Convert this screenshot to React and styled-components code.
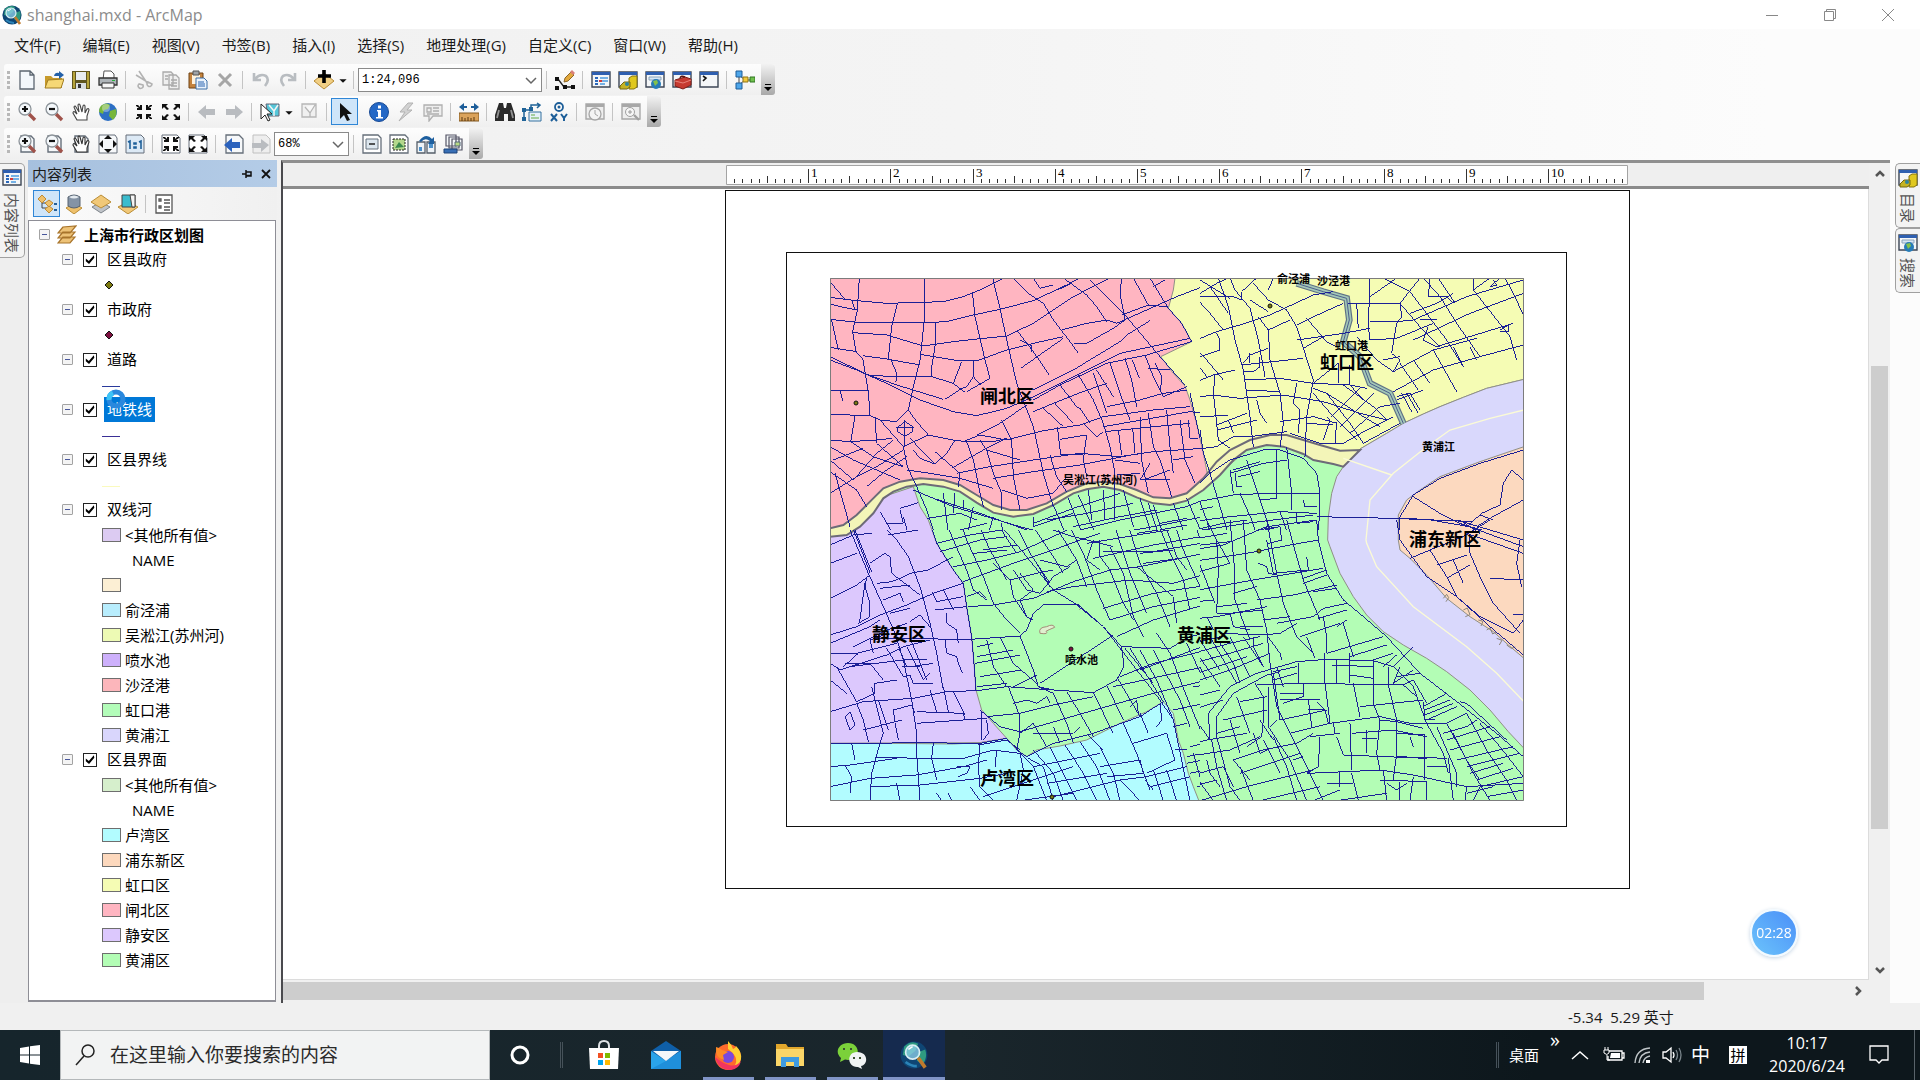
import React, { useState } from "react";
import styled, { createGlobalStyle, css } from "styled-components";

const GlobalStyle = createGlobalStyle`
  * {
    box-sizing: border-box;
  }
  html, body, #root {
    margin: 0;
    height: 100%;
  }
  body {
    font-family: "Open Sans", "Noto Sans CJK SC", sans-serif;
    font-size: 15px;
    line-height: 20px;
    color: #1a1a1a;
    overflow: hidden;
  }
  button, input, select {
    font: inherit;
    color: inherit;
    margin: 0;
    padding: 0;
    border: 0;
    background: none;
    border-radius: 0;
  }
`;

const Window = styled.div`
  display: flex;
  flex-direction: column;
  height: 100vh;
  background: linear-gradient(90deg, #f0f0f0, #f4f4f4 50%, #fcfcfc 92%);
`;

const TitleBar = styled.header`
  display: flex;
  align-items: center;
  height: 29px;
  padding: 0 3px 0 2px;
  background: #fff;
  color: #8c8c8c;
`;

const Title = styled.h1`
  flex: 1;
  margin: 0 0 0 5px;
  font-size: 16px;
  font-weight: 400;
`;

const WindowButton = styled.button`
  display: flex;
  align-items: center;
  justify-content: center;
  width: 58px;
  height: 29px;
`;

const MenuBar = styled.nav`
  display: flex;
  align-items: center;
  height: 33px;
  padding: 0 0 1px 14px;
  gap: 22px;
`;

const MenuItem = styled.button`
  white-space: nowrap;
`;

const Toolbars = styled.div`
  display: flex;
  flex-direction: column;
  align-items: flex-start;
  gap: 1px;
  height: 98px;
  padding: 2px 0 0 4px;
`;

const Toolbar = styled.div`
  display: flex;
  align-items: center;
  height: 31px;
  padding-left: 8px;
  border-radius: 3px;
  background: linear-gradient(#fdfdfd, #f6f6f6 60%, #efefef);
`;

const Grip = styled.span`
  width: 3px;
  height: 18px;
  margin: 0 3px 0 -5px;
  background: repeating-linear-gradient(#b8b8b8 0 3px, transparent 3px 5px);
`;

const ToolButton = styled.button`
  display: flex;
  align-items: center;
  justify-content: center;
  width: ${(p) => (p.$narrow ? 12 : 27)}px;
  height: 27px;
  ${(p) =>
    p.$active &&
    css`
      background: #cfe5f9;
      border: 1px solid #2f86d6;
    `}
`;

const Separator = styled.span`
  width: 1px;
  height: 18px;
  margin: 0 4px;
  background: #c4c4c4;
`;

const Spacer = styled.span`
  width: 7px;
`;

const Overflow = styled.button`
  display: flex;
  align-items: flex-end;
  justify-content: center;
  align-self: stretch;
  width: 14px;
  margin-left: 3px;
  padding-bottom: 3px;
  border-radius: 0 3px 3px 0;
  background: linear-gradient(#f2f2f2, #a9a9a9);
`;

const Combo = styled.label`
  position: relative;
  display: flex;
  width: ${(p) => p.$width}px;
  height: 24px;
  svg {
    position: absolute;
    right: 5px;
    top: 8px;
    pointer-events: none;
  }
`;

const Select = styled.select`
  flex: 1;
  appearance: none;
  padding-left: 3px;
  border: 1px solid #8a8a8a;
  background: #fff;
  font-family: "Liberation Mono", monospace;
  font-size: 12px;
  color: #000;
`;

const Workspace = styled.main`
  display: flex;
  flex: 1;
  min-height: 0;
`;

const SideTabs = styled.div`
  display: flex;
  flex-direction: column;
  align-items: ${(p) => (p.$right ? "flex-end" : "flex-start")};
  width: ${(p) => (p.$right ? 30 : 28)}px;
  padding-top: 3px;
  background: ${(p) => (p.$right ? "#fcfcfc" : "#eeeeee")};
`;

const SideTab = styled.button`
  display: flex;
  flex-direction: column;
  align-items: center;
  width: 25px;
  gap: 5px;
  padding: 4px 0;
  border: 1px solid #a0a0a0;
  border-radius: ${(p) => (p.$right ? "5px 0 0 5px" : "0 5px 5px 0")};
  ${(p) => (p.$right ? "border-right: 0;" : "border-left: 0;")}
  background: #f3f3f3;
  color: #555;
  span {
    writing-mode: vertical-rl;
    text-orientation: sideways;
  }
`;

const Panel = styled.aside`
  display: flex;
  flex-direction: column;
  width: 249px;
  margin-right: 4px;
`;

const PanelHeader = styled.div`
  display: flex;
  align-items: center;
  height: 27px;
  padding: 0 5px 0 4px;
  gap: 7px;
  background: linear-gradient(90deg, #a6c0de, #b4cce7);
  h2 {
    flex: 1;
    margin: 0;
    font-size: 15px;
    font-weight: 400;
  }
  button {
    display: flex;
  }
`;

const PanelTools = styled.div`
  display: flex;
  align-items: center;
  height: 33px;
  padding-left: 5px;
  background: linear-gradient(90deg, #fbfbfb, #f0f0f0);
`;

const Tree = styled.ul`
  flex: 1;
  margin: 0 1px 1px 0;
  padding: 1px 0 0;
  list-style: none;
  background: #fff;
  border: 1px solid #8e8e96;
  border-bottom-width: 2px;
`;

const TreeRow = styled.li`
  position: relative;
  display: flex;
  align-items: center;
  height: 25px;
  padding-left: ${(p) => p.$indent}px;
  font-weight: ${(p) => (p.$bold ? 700 : 400)};
  white-space: nowrap;
  color: #000;
`;

const Expander = styled.button`
  width: 11px;
  height: 11px;
  border: 1px solid #a3a3a3;
  border-radius: 1px;
  background: linear-gradient(#47569b, #47569b) center / 5px 1px no-repeat #f4f4f4;
`;

const Check = styled.input`
  appearance: none;
  width: 14px;
  height: 14px;
  border: 1px solid #222;
  background: #fff;
  &:checked::after {
    content: "";
    display: block;
    width: 12px;
    height: 12px;
    background: #000;
    clip-path: polygon(15% 42%, 40% 62%, 82% 14%, 86% 36%, 42% 88%, 15% 64%);
  }
`;

const LayerLabel = styled.label`
  display: flex;
  align-items: center;
  margin-left: 10px;
  gap: 7px;
  span {
    height: 25px;
    padding: 2px 3px;
    ${(p) => p.$selected && "background: #0078d7; color: #fff;"}
  }
`;

const Busy = styled.svg`
  position: absolute;
  left: 77px;
  top: -8px;
`;

const Swatch = styled.span`
  width: 19px;
  height: 14px;
  margin-right: 4px;
  border: 1px solid #6e6e6e;
  background: ${(p) => p.$color};
`;

const Symbol = styled.svg`
  display: block;
`;

const View = styled.section`
  display: flex;
  flex: 1;
  min-width: 0;
  border-left: 2px solid #4a4a4e;
  border-top: 3px solid #8f8f8f;
  background: #efefef;
`;

const ViewColumn = styled.div`
  display: flex;
  flex-direction: column;
  flex: 1;
  min-width: 0;
`;

const RulerBar = styled.div`
  height: 26px;
  padding: 2px 0 0 443px;
  border-bottom: 3px solid #8b8b8b;
  overflow: hidden;
`;

const RulerFace = styled.svg`
  display: block;
  font-family: "Liberation Serif", serif;
  font-size: 13px;
`;

const Canvas = styled.div`
  flex: 1;
  min-height: 0;
  padding: 1px 0 0 442px;
  background: #fff;
  border-right: 1px solid #dcdcdc;
  border-bottom: 1px solid #dcdcdc;
  overflow: hidden;
`;

const Page = styled.div`
  width: 905px;
  height: 699px;
  padding: 61px 60px;
  border: 1px solid #111;
`;

const DataFrame = styled.div`
  width: 781px;
  height: 575px;
  padding: 25px 43px;
  border: 1px solid #111;
`;

const MapDrawing = styled.svg`
  display: block;
  overflow: visible;
  font-family: "Noto Sans CJK SC", sans-serif;
`;

const ScrollBar = styled.div`
  display: flex;
  flex-direction: ${(p) => (p.$vertical ? "column" : "row")};
  ${(p) => (p.$vertical ? "width: 21px; padding: 0 2px;" : "height: 23px; padding: 2px 0 3px;")}
  background: #f0f0f0;
`;

const Track = styled.div`
  flex: ${(p) => p.$size};
`;

const Thumb = styled.div`
  flex: ${(p) => p.$size};
  background: #cdcdcd;
`;

const ScrollButton = styled.button`
  display: flex;
  align-items: center;
  justify-content: center;
  ${(p) => (p.$vertical ? "height: 22px;" : "width: 22px;")}
`;

const StatusBar = styled.footer`
  display: flex;
  justify-content: flex-end;
  align-items: center;
  height: 27px;
  background: #f0f0f0;
  p {
    width: 352px;
    margin: 0;
    white-space: pre;
  }
`;

const Timer = styled.div`
  position: fixed;
  right: 122px;
  bottom: 123px;
  display: flex;
  align-items: center;
  justify-content: center;
  width: 48px;
  height: 48px;
  border: 2px solid #f2faff;
  border-radius: 50%;
  background: linear-gradient(45deg, #6cc4fb, #4a8ff8);
  box-shadow: 0 1px 4px #c4d4e4;
  color: #fff;
  font-size: 14px;
`;

const TaskBar = styled.div`
  display: flex;
  align-items: stretch;
  height: 50px;
  background: linear-gradient(90deg, #16252c, #1a262c 50%, #0d171c 80%);
  color: #fff;
`;

const TaskButton = styled.button`
  display: flex;
  align-items: center;
  justify-content: center;
  width: ${(p) => p.$width || 62}px;
  border-bottom: 3px solid transparent;
  border-top: 3px solid transparent;
  ${(p) =>
    p.$open &&
    css`
      background: linear-gradient(#8094c6, #8094c6) center bottom / ${p.$active ? 62 : 51}px 3px no-repeat
        ${p.$active ? "#152a4e" : "transparent"};
      background-origin: border-box;
    `}
`;

const SearchBox = styled.label`
  display: flex;
  align-items: center;
  width: 430px;
  gap: 15px;
  padding-left: 14px;
  border: 1px solid #b4b8ba;
  background: #f2f3f3;
  color: #222;
  input {
    flex: 1;
    min-width: 0;
    font-size: 19px;
    outline: 0;
  }
  input::placeholder {
    color: #2a2a2a;
    opacity: 1;
  }
`;

const TaskDivider = styled.span`
  width: 3px;
  height: 26px;
  align-self: center;
  border: 1px solid #46525a;
  border-width: 0 1px;
`;

const Tray = styled.div`
  display: flex;
  align-items: center;
  margin-left: auto;
`;

const TrayItem = styled.button`
  display: flex;
  align-items: center;
  justify-content: center;
  width: ${(p) => p.$width || 29}px;
  font-size: ${(p) => p.$size || 15}px;
  ${(p) => p.$raised && "align-self: flex-start;"}
`;

const Ime = styled.span`
  width: 18px;
  height: 18px;
  background: #fff;
  color: #000;
  font-size: 15px;
  line-height: 18px;
`;

const Clock = styled.time`
  width: 92px;
  font-size: 16px;
  line-height: 23px;
  text-align: center;
`;

const ShowDesktop = styled.button`
  width: 6px;
  margin-left: 9px;
  align-self: stretch;
  border-left: 1px solid #59636a;
`;

const pageShape = (
  <path d="M4 2h10l3 3v13H4z" fill="#f6f8fa" stroke="#666f7a" strokeWidth="1.4" />
);
const frameShape = (
  <>
    <path d="M1 2h18v15H1z" fill="#f4f6f8" stroke="#3c4656" strokeWidth="1.4" />
    <path d="M1 2h18v3H1z" fill="#2e5fb0" />
  </>
);
const grayFrame = (
  <>
    <path d="M1 2h18v15H1z" fill="#eee" stroke="#a8a8a8" strokeWidth="1.4" />
    <path d="M1 2h18v3H1z" fill="#a8a8a8" />
  </>
);
const inward = "M2 3h2l2 2V3h2v5H3V6h2L2 4zM18 3h-2l-2 2V3h-2v5h5V6h-2l3-2zM2 17h2l2-2v2h2v-5H3v2h2l-3 2zM18 17h-2l-2-2v2h-2v-5h5v2h-2l3 2z";
const outward = "M1 2h6L5 4l3 3-2 1-3-3-2 2zM19 2h-6l2 2-3 3 2 1 3-3 2 2zM1 18h6l-2-2 3-3-2-1-3 3-2-2zM19 18h-6l2-2-3-3 2-1 3 3 2-2z";
const handPath = "M6 18 2 11q0-2 2-1l2 2-3-7q1-2 2 0l3 5-1-7q1-2 2 0l2 7 1-6q1-2 2 0v7l2-4q2-1 2 1l-2 6v4z";
const lens = (sign) => (
  <>
    <path d="m12 12 6 6" stroke="#a0524a" strokeWidth="3.4" />
    <circle cx="8" cy="7" r="6" fill="#f4f8fb" stroke="#8c9399" strokeWidth="1.3" />
    <path d={sign} stroke="#111" strokeWidth="2.2" />
  </>
);
const globe = (
  <>
    <circle cx="10" cy="10" r="9" fill="#2d6fc4" />
    <path d="M4 3q5-3 8 0l-2 4-4 1-1 4-4-2q0-5 3-7zm8 6 6-2q2 6-3 11l-4-4z" fill="#77b63c" />
    <circle cx="8" cy="6" r="4" fill="#fff" opacity=".35" />
  </>
);

const icons = {
  app: (
    <>
      <circle cx="10" cy="10" r="9.6" fill="#0f4674" />
      <path d="M3 4q5-5 10-2l-2 5-5 4-4-1zm10 4 5-2q2 6-2 11l-4-3z" fill="#2f9a80" />
      <path d="M4 15q4 3 8 3" stroke="#2b84b8" strokeWidth="2" />
      <circle cx="9" cy="8" r="5" fill="#8fd0ea" fillOpacity=".75" stroke="#d9eef4" strokeWidth="1.2" />
      <path d="m6 6 3-2" stroke="#fff" />
      <path d="m13 12 5 7" stroke="#c07a2c" strokeWidth="2.6" />
    </>
  ),
  new: <path d="M3 1h10l4 4v14H3zM13 1v4h4" fill="#f3f7fb" stroke="#5c6670" strokeWidth="1.3" />,
  open: (
    <>
      <path d="M1 6h6l2 2h9v10H1z" fill="#c79a2b" />
      <path d="m4 10 16-1-3 9H1z" fill="#f6d876" stroke="#a17d22" />
      <path d="M10 6q1-4 5-3V1l5 4-5 4V6z" fill="#2360a8" />
    </>
  ),
  save: (
    <>
      <path d="M1 1h18v18H1z" fill="#5f5620" />
      <path d="M5 2h10v8H5z" fill="#e8edf0" />
      <path d="M5 13h10v6H5z" fill="#d8dde0" />
      <path d="M7 14h3v4H7z" fill="#333" />
      <path d="M2 2h2v16H2zm14 0h2v16h-2z" fill="#b6a43a" />
    </>
  ),
  print: (
    <>
      <path d="M6 1h7l3 3v6H5z" fill="#fff" stroke="#555" />
      <path d="M1 8h18v7H1z" fill="#aeb4b8" stroke="#333" strokeWidth="1.3" />
      <path d="M4 13h12v5H4z" fill="#f6f6f6" stroke="#333" />
      <path d="M14 10h3v1h-3z" fill="#24b43a" />
    </>
  ),
  cut: <path d="m5 1 8 12M2 5l13 8M9 15a2.5 2.5 0 1 1-4-1zm9-1a2.5 2.5 0 1 1-4-2z" stroke="#b3b3b3" strokeWidth="1.6" fill="none" />,
  copy: <path d="M2 2h8l2 2v11H2zM8 5h7l3 3v11H8zM10 10h6m-6 3h6m-6 3h6M4 6h3M4 9h3" fill="#efefef" stroke="#aaa" strokeWidth="1.3" />,
  paste: (
    <>
      <path d="M1 3h14v15H1z" fill="#c4823c" stroke="#6f4215" />
      <path d="M4 5h8v9H4z" fill="#fff2dd" />
      <path d="M5 1h6v4H5z" fill="#a0a4a8" stroke="#555" />
      <path d="M8 8h8l3 3v8H8z" fill="#eaf3fc" stroke="#3c6ea6" />
      <path d="M10 12h6m-6 2h7m-7 2h7" stroke="#2b64b0" />
    </>
  ),
  delete: <path d="m4 4 12 12M16 4 4 16" stroke="#a6a6a6" strokeWidth="3" />,
  undo: <path d="M3 3v7h7M4 9q5-6 11-3 4 4-1 10" stroke="#b9bdc1" strokeWidth="2.6" fill="none" />,
  redo: <path d="M17 3v7h-7M16 9Q11 3 5 6q-4 4 1 10" stroke="#b9bdc1" strokeWidth="2.6" fill="none" />,
  add: (
    <>
      <path d="m10 3 10 8-10 8-10-8z" fill="#f1cf84" stroke="#b98c36" />
      <path d="M10 0v13M4 6h13" stroke="#000" strokeWidth="3.6" />
    </>
  ),
  down: <path d="M1 8h18l-9 9z" fill="#111" />,
  editor: (
    <>
      <path d="m3 9 6 8h9" stroke="#222" fill="none" strokeWidth="1.3" />
      <path d="M0 7h4v4H0zm0 9h4v4H0zm8-1h4v4H8zm8 0h4v4h-4z" fill="#111" />
      <path d="m9 12 1-4 6-6 3 3-6 6z" fill="#e2a83c" stroke="#8b6527" />
      <path d="m15 2 2-2 3 3-2 2z" fill="#d97f7a" />
    </>
  ),
  toc: (
    <>
      {frameShape}
      <path d="M4 8h3m-3 3h3m-3 3h3" stroke="#2a68bc" strokeWidth="1.8" />
      <path d="M9 8h8M9 11h8M9 14h5" stroke="#4a9adf" strokeWidth="1.6" />
      <path d="M8 10h3v2H8z" fill="#d23c3c" />
    </>
  ),
  catalog: (
    <>
      {frameShape}
      <path d="m11 8 3-2h5v11l-3 2h-5z" fill="#e0c81f" stroke="#857410" />
      <path d="m2 16 4-4h6v5l-3 2H2z" fill="#c5b322" stroke="#726612" />
      <circle cx="9" cy="14" r="2" fill="#2f84a0" />
    </>
  ),
  search: (
    <>
      {frameShape}
      <path d="M4 7h12v3H4z" fill="#d5e6f5" stroke="#8da4ba" />
      <circle cx="11" cy="14" r="5" fill="#277bb7" />
      <path d="m8 11 4-1 1 3-3 3z" fill="#83c24b" />
    </>
  ),
  toolbox: (
    <>
      {frameShape}
      <path d="m3 10 10-3 6 2v6l-8 4-8-3z" fill="#c63a30" stroke="#7d1c16" />
      <path d="M8 8q1-3 5-1" stroke="#5a1511" fill="none" strokeWidth="1.4" />
      <path d="m3 11 8 2 8-3" stroke="#e8837a" fill="none" />
    </>
  ),
  python: (
    <>
      {frameShape}
      <path d="m4 6 3 2-3 3" stroke="#111" strokeWidth="1.6" fill="none" />
    </>
  ),
  model: (
    <>
      <path d="M4 5v10M4 5l6 5h7M4 15l6-5" stroke="#444" fill="none" />
      <path d="M1 1h6v6H1zm0 12h6v6H1z" fill="#4ea6ea" stroke="#1d5c98" />
      <path d="M8 7h5v5H8z" fill="#f2c93b" stroke="#8e7317" />
      <path d="M15 7h5v5h-5z" fill="#70c04e" stroke="#2f7421" />
    </>
  ),
  zoomIn: lens("M5 7h6M8 4v6"),
  zoomOut: lens("M5 7h6"),
  pan: <path d={handPath} fill="#fff" stroke="#444" strokeWidth="1.1" />,
  globe,
  fixedIn: <path d={inward} fill="#111" />,
  fixedOut: <path d={outward} fill="#111" />,
  back: <path d="m1 10 8-7v4h9v6H9v4z" fill="#b9bcc0" />,
  forward: <path d="m19 10-8-7v4H2v6h9v4z" fill="#b9bcc0" />,
  select: (
    <>
      <path d="M6 2h13v12H8z" fill="#55c6d9" stroke="#667" />
      <path d="m9 3 5 6 4-6M14 9v5" stroke="#f4f4f4" fill="none" strokeWidth="1.5" />
      <path d="M1 2v15l4-4 3 6 2-1-3-6h5z" fill="#fff" stroke="#222" />
    </>
  ),
  clear: <path d="M3 2h14v13H3zM6 5l5 6 5-8M11 11v4" fill="#f0f0f0" stroke="#b6b6b6" strokeWidth="1.3" />,
  pointer: <path d="M5 1v16l4-4 3 6 3-1-3-6h5z" fill="#111" />,
  info: (
    <>
      <circle cx="10" cy="10" r="9.5" fill="#2468c6" stroke="#184993" />
      <path d="M8 8h4v7h2v1.500H7V15h2v-5.500H8zM9 3.500h3v3H9z" fill="#fff" />
    </>
  ),
  bolt: <path d="m12 1-8 9h5l-6 9 13-11h-5l6-7z" fill="#d2d2d2" stroke="#b2b2b2" />,
  popup: <path d="M1 3h18v11h-9l-4 5v-5H1zM4 6h4v4H4zm6 0h6m-6 3h6M4 12h12" fill="#eee" stroke="#b0b0b0" strokeWidth="1.3" />,
  measure: (
    <>
      <path d="m0 5 5-4v3h3v2H5v3zm20 0-5-4v3h-3v2h3v3z" fill="#1c5d99" />
      <path d="M0 11h20v8H0z" fill="#dba35b" stroke="#80561f" />
      <path d="M3 19v-4m3 4v-3m3 3v-4m3 4v-3m3 3v-4" stroke="#5a3910" />
    </>
  ),
  find: (
    <>
      <path d="M4 1h4l1 5h2l1-5h4l4 12v6h-7v-7H9v7H0v-6z" fill="#2b2b2b" />
      <path d="m4 8-2 8m14-8 2 8" stroke="#929292" strokeWidth="1.8" />
    </>
  ),
  route: (
    <>
      <path d="M2 17V8h7V3h8M15 1l3 2-3 3" stroke="#1f6398" strokeWidth="1.5" fill="none" />
      <path d="M0 6h4v4H0zm7-1h4v4H7zM0 15h4v4H0z" fill="#1f6398" />
      <path d="M7 10h12v9H7z" fill="#e6f1fa" stroke="#35719f" />
      <path d="M9 13h4m-4 3h8" stroke="#65a944" />
    </>
  ),
  xy: (
    <>
      <circle cx="10" cy="5" r="4" fill="none" stroke="#1e5f99" strokeWidth="1.8" />
      <circle cx="10" cy="5" r="1.500" fill="#1e5f99" />
      <path d="m2 12 6 7M8 12l-6 7M12 12l3 4 3-4M15 16v3" stroke="#1e5f99" strokeWidth="2" fill="none" />
    </>
  ),
  time: (
    <>
      {grayFrame}
      <circle cx="10" cy="12" r="6" fill="#f4f4f4" stroke="#a6a6a6" strokeWidth="1.3" />
      <path d="M10 8v4l3 2" stroke="#a6a6a6" fill="none" />
    </>
  ),
  viewer: (
    <>
      {grayFrame}
      <circle cx="9" cy="10" r="4.500" fill="#f6f6f6" stroke="#a0a0a0" />
      <path d="m13 13 5 5" stroke="#a0a0a0" strokeWidth="2.4" />
      <path d="M7 10h4M9 8v4" stroke="#999" />
    </>
  ),
  pageIn: (
    <>
      {pageShape}
      {lens("M5 7h6M8 4v6")}
    </>
  ),
  pageOut: (
    <>
      {pageShape}
      {lens("M5 7h6")}
    </>
  ),
  pagePan: (
    <>
      {pageShape}
      <path d={handPath} fill="#fff" stroke="#333" strokeWidth="1.1" />
    </>
  ),
  pageFull: (
    <>
      <path d="M1 1h16l2 3v15H1z" fill="#f6f8fa" stroke="#666f7a" />
      <path d="m10 1 4 4H6zm0 18 4-4H6zM1 10l4-4v8zm18 0-4-4v8z" fill="#111" />
    </>
  ),
  pageOne: (
    <>
      <path d="M1 1h15l3 3v15H1z" fill="#dce9f5" stroke="#666f7a" />
      <path d="M3 8l2-1v8m9-7 2-1v8M9 9h2v1H9zm0 4h2v1H9z" stroke="#1e5f99" strokeWidth="1.600" fill="none" />
    </>
  ),
  pageFixedIn: (
    <>
      <path d="M1 1h15l3 3v15H1z" fill="#fff" stroke="#666f7a" />
      <path d={inward} fill="#111" />
    </>
  ),
  pageFixedOut: (
    <>
      <path d="M1 1h15l3 3v15H1z" fill="#fff" stroke="#666f7a" />
      <path d={outward} fill="#111" />
    </>
  ),
  pageBack: (
    <>
      <path d="M2 1h13l4 4v14H2z" fill="#f6f8fa" stroke="#666f7a" strokeWidth="1.3" />
      <path d="m0 11 8-7v4h8v6H8v4z" fill="#2b62bd" />
    </>
  ),
  pageForward: (
    <>
      <path d="M2 1h13l4 4v14H2z" fill="#eee" stroke="#c0c0c0" />
      <path d="m18 11-8-6v4H1v5h9v4z" fill="#b9bcc0" />
    </>
  ),
  draft: (
    <>
      <path d="M1 1h15l3 3v15H1z" fill="#fff" stroke="#666f7a" strokeWidth="1.3" />
      <path d="M4 5h12v10H4z" fill="#dce6ee" stroke="#66727e" />
      <path d="M7 10h6" stroke="#222" strokeWidth="1.500" />
    </>
  ),
  focus: (
    <>
      <path d="M1 1h15l3 3v15H1z" fill="#fff" stroke="#666f7a" strokeWidth="1.3" />
      <path d="M4 5h12v11H4z" fill="#b4d88c" stroke="#222" strokeDasharray="2 1" />
      <path d="m6 14 4-6 5 5z" fill="#3c8b4e" />
    </>
  ),
  layout: (
    <>
      <path d="M1 8h8v11H1zm10 0h8v11h-8z" fill="#eef3f7" stroke="#555f6a" strokeWidth="1.300" />
      <path d="M3 13h3v4H3zm10-3h4v4h-4z" fill="#4a90cc" />
      <path d="M3 7q7-9 13-2l2-2v7h-6l2-3q-5-4-9 1z" fill="#1e5f9f" />
    </>
  ),
  pages: (
    <>
      <path d="M3 1h10v11H3zM6 3h10v11H6zM9 5h10v11H9z" fill="#f3f6f8" stroke="#556" strokeWidth="1.200" />
      <path d="M12 8h5v4h-5z" fill="#b6d884" stroke="#567" />
      <path d="M1 15h13v4H1z" fill="#386fb5" stroke="#1c4278" />
    </>
  ),
  byOrder: (
    <>
      <path d="M5 5v9h6M5 9h6" stroke="#444" fill="none" />
      <path d="m5 1 4 4-4 4-4-4zm7 5 4 3-4 4-4-4zm0 6 4 3-4 4-4-4z" fill="#eec06b" stroke="#c08a32" />
      <path d="M17 10h3m-3 6h3" stroke="#24609a" strokeWidth="2" />
    </>
  ),
  bySource: (
    <>
      <path d="m10 9 8 5-8 6-8-6z" fill="#eec06b" stroke="#b98c36" />
      <path d="M4 3q6-4 12 0v9q-6 4-12 0z" fill="#8493a5" stroke="#566270" />
      <path d="M5 3q5 3 10 0-5-3-10 0z" fill="#e4eaef" />
    </>
  ),
  byVisible: (
    <>
      <path d="m10 8 9 5-9 6-9-6z" fill="#bfc3c8" stroke="#7d838a" />
      <path d="m10 1 10 7-10 6L0 8z" fill="#f1c878" stroke="#b98c36" />
    </>
  ),
  bySelect: (
    <>
      <path d="m10 8 10 5-10 7-10-7z" fill="#f1c878" stroke="#b98c36" />
      <path d="M4 1h13v12H4z" fill="#3bbccd" stroke="#444" />
      <path d="M12 1h5v12h-3z" fill="#f4f4f4" stroke="#444" />
    </>
  ),
  options: <path d="M2 1h16v18H2zM5 5h2v2H5zm0 7h2v2H5zm5 1h6M10 6h6M10 9h6M10 16h6" fill="#fff" stroke="#555" strokeWidth="1.300" />,
  layers: (
    <path d="m6 12-5 6h12l5-6zM6 7l-5 6h12l5-6zm0-5L1 8h12l6-7z" fill="#edc277" stroke="#a8742b" strokeWidth="1.200" />
  ),
};

const Icon = ({ name, size = 20 }) => (
  <svg width={size} height={size} viewBox="0 0 20 20" fill="none" aria-hidden="true">
    {icons[name]}
  </svg>
);

const Chevron = ({ d, color = "#555", width = 2 }) => (
  <svg width="12" height="10" viewBox="0 0 12 10" fill="none" aria-hidden="true">
    <path d={d} stroke={color} strokeWidth={width} />
  </svg>
);

const menus = [
  "文件(F)",
  "编辑(E)",
  "视图(V)",
  "书签(B)",
  "插入(I)",
  "选择(S)",
  "地理处理(G)",
  "自定义(C)",
  "窗口(W)",
  "帮助(H)",
];

const toolRows = [
  "new open save print | cut copy paste delete | undo redo | add down | scale | editor | toc catalog search toolbox python | model",
  "zoomIn zoomOut pan globe | fixedIn fixedOut | back forward | select down clear | pointer _ info bolt popup | measure | find route xy | time | viewer",
  "pageIn pageOut pagePan pageFull pageOne | pageFixedIn pageFixedOut | pageBack pageForward zoom | draft focus layout pages",
];

const combos = {
  scale: { width: 184, value: "1:24,096" },
  zoom: { width: 75, value: "68%" },
};

const Tool = ({ name }) => {
  if (name === "|") return <Separator />;
  if (name === "_") return <Spacer />;
  if (combos[name]) {
    const { width, value } = combos[name];
    return (
      <Combo $width={width}>
        <Select aria-label={name} defaultValue={value}>
          <option>{value}</option>
        </Select>
        <Chevron d="m1 2 5 5 5-5" color="#666" width={1.500} />
      </Combo>
    );
  }
  return (
    <ToolButton $narrow={name === "down"} $active={name === "pointer"} aria-label={name}>
      <Icon name={name} size={name === "down" ? 8 : 20} />
    </ToolButton>
  );
};

const tree = [
  { layer: "区县政府" },
  { point: "#7c7a10" },
  { layer: "市政府" },
  { point: "#7d1040" },
  { layer: "道路" },
  { line: "#2a3a9c" },
  { layer: "地铁线", selected: true },
  { line: "#3a2f96" },
  { layer: "区县界线" },
  { line: "#fafabe" },
  { layer: "双线河" },
  { swatch: "#dccbf2", text: "<其他所有值>" },
  { heading: "NAME" },
  { swatch: "#fcefd4", text: "" },
  { swatch: "#b8edfd", text: "俞泾浦" },
  { swatch: "#edfab4", text: "吴淞江(苏州河)" },
  { swatch: "#cdb0fb", text: "喷水池" },
  { swatch: "#fcb6bb", text: "沙泾港" },
  { swatch: "#b3fcb9", text: "虹口港" },
  { swatch: "#d9d6fc", text: "黄浦江" },
  { layer: "区县界面" },
  { swatch: "#d6efcc", text: "<其他所有值>" },
  { heading: "NAME" },
  { swatch: "#b2fcff", text: "卢湾区" },
  { swatch: "#fcd8bd", text: "浦东新区" },
  { swatch: "#f5fcb4", text: "虹口区" },
  { swatch: "#ffb5c1", text: "闸北区" },
  { swatch: "#dcc8fd", text: "静安区" },
  { swatch: "#b3fdb5", text: "黄浦区" },
];

const TreeItem = ({ item }) => {
  const [checked, setChecked] = useState(true);
  if (item.layer) {
    return (
      <TreeRow $indent={33}>
        <Expander aria-label="收起" />
        <LayerLabel $selected={item.selected}>
          <Check type="checkbox" checked={checked} onChange={(e) => setChecked(e.target.checked)} />
          <span>{item.layer}</span>
        </LayerLabel>
        {item.selected && (
          <Busy width="20" height="20" viewBox="0 0 20 20">
            <circle cx="10" cy="10" r="7" fill="none" stroke="#2b88dd" strokeWidth="5" />
            <path d="M3 11a7 7 0 0 1 4-7" fill="none" stroke="#3cc4f7" strokeWidth="5" />
          </Busy>
        )}
      </TreeRow>
    );
  }
  if (item.point || item.line) {
    return (
      <TreeRow $indent={73}>
        <Symbol width="20" height="10" viewBox="0 0 20 10">
          {item.point ? (
            <path d="m7 1 4 4-4 4-4-4z" fill={item.point} stroke="#111" />
          ) : (
            <path d="M0 6.500h18" stroke={item.line} />
          )}
        </Symbol>
      </TreeRow>
    );
  }
  if (item.heading) return <TreeRow $indent={103}>{item.heading}</TreeRow>;
  return (
    <TreeRow $indent={73}>
      <Swatch $color={item.swatch} />
      {item.text}
    </TreeRow>
  );
};

const Ruler = () => {
  const inch = 82.2;
  const ticks = [];
  for (let i = 1; i < 110; i++) {
    const h = i % 10 === 0 ? 14 : i % 5 === 0 ? 7 : 4;
    ticks.push(`M${Math.round((i * inch) / 10)}.5 18v-${h}`);
  }
  return (
    <RulerFace width="902" height="20" viewBox="0 0 902 20">
      <path d="M.5.5h901v19H.5z" fill="#fff" stroke="#a4a4a4" />
      <path d={ticks.join("")} stroke="#333" />
      {[1, 2, 3, 4, 5, 6, 7, 8, 9, 10].map((n) => (
        <text key={n} x={Math.round(n * inch) + 3} y="12">
          {n}
        </text>
      ))}
    </RulerFace>
  );
};

// Everything below is digitised at three units per pixel.
const districts = [
  ["#f5fcb4", "M1000 54H2112V358L2000 385 1930 412 1860 440 1810 462 1750 490 1700 520 1620 567 1570 618 1480 600 1450 580 1390 560 1340 555 1280 570 1200 640 1100 640 1000 300z"],
  ["#ffb5c1", "M30 54H1065L1060 90 1045 145 1085 190 1115 245 1022 290 1060 340 1095 378 1110 420 1130 490 1150 580 1163 645 1100 710 1000 720 900 680 800 680 680 740 560 760 470 715 370 670 240 675 190 700 110 780 30 815z"],
  ["#dcc8fd", "M30 820 120 790 190 710 280 680 300 740 325 780 350 850 400 930 430 970 440 1040 455 1130 462 1210 468 1290 485 1350 520 1390 560 1435 480 1448 30 1450z"],
  ["#b2fcff", "M30 1450 200 1450 400 1452 480 1448 560 1435 590 1470 620 1490 650 1470 720 1458 800 1440 900 1390 980 1355 1030 1325 1060 1360 1075 1440 1090 1480 1105 1540 1120 1580 1137 1623H30z"],
  ["#d9d8fc", "M2112 358 2000 385 1930 412 1860 440 1810 462 1750 490 1700 520 1620 567 1590 600 1570 620 1550 650 1535 700 1525 770 1523 840 1530 860 1560 940 1600 1010 1640 1065 1690 1115 1750 1155 1820 1195 1880 1235 1950 1290 2010 1350 2065 1415 2112 1465z"],
  ["#fcd9bf", "M2112 560 1980 605 1860 650 1800 690 1760 720 1735 765 1735 840 1740 870 1770 895 1820 945 1880 1015 1950 1070 2020 1115 2065 1155 2112 1195z"],
];

const wusongRiver =
  "M30 805 70 795 110 765 150 725 190 685 240 665 300 655 370 660 420 675 470 705 520 735 570 750 620 750 680 730 740 695 800 670 850 665 900 672 950 690 1000 712 1050 715 1100 700 1150 655 1190 605 1230 570 1290 540 1350 525 1400 525 1450 540 1500 555 1560 572 1620 570 1570 620 1540 612 1480 600 1450 582 1390 560 1340 555 1280 570 1240 600 1200 645 1150 690 1100 722 1050 735 1000 730 950 712 900 690 850 680 800 688 760 700 700 735 640 762 580 770 520 758 470 728 420 695 370 680 310 672 260 680 220 695 190 715 160 760 120 800 80 825 30 830z";

// The sheets share a margin, so each one is cut at the seam.
const roads = [
  {
    id: "nw",
    seam: "M0 0H1140V810H0z",
    at: "translate(0 0)",
    d: `M118 54 112 150 98 215 108 275 128 295 145 395 150 467M314 54 312 190 300 300 280 380 265 450M250 560 262 620 290 680 320 750 350 840
M30 65 75 118M30 112 110 122 200 130 370 125 430 110 480 90 550 55M30 132 70 142 112 150M95 120 104 148
M30 178 100 186 200 187 310 188 380 185 460 165 540 148 640 122 740 75 780 54M232 130 215 200 205 297
M100 218 200 225 310 258 400 245 490 235 560 228 640 190 760 110 870 54M35 180 55 270M30 262 110 275M128 287 200 297 300 315
M300 283 400 300 470 303 560 270 640 250 730 230M348 187 345 260 335 320 335 350M457 95 465 170 480 235 495 300 510 355 440 395
M518 54 540 145 560 240 590 370 640 500 670 640 700 740M460 303 460 350 440 380 425 385 375 418M425 305 400 370M460 350 482 375
M213 300 230 340 228 365M145 345 215 350 335 350 400 370 435 397M30 290 145 345 240 378 370 418
M30 300 110 330 200 370 300 420 400 455 470 467 560 445 640 410 760 350 900 280 1110 235M640 390 760 330 900 245 920 225 990 182
M580 55 625 100 670 130 700 180 750 245 775 280M640 54 660 85 700 75M590 210 640 275 688 345M602 325 730 235M600 240 635 258 635 275
M730 54 800 105 830 140 860 185M712 90 750 72M725 210 800 190 860 180 890 190 1070 110 1200 60M762 250 800 250 880 205 915 180 900 100 905 54
M905 165 985 135 1040 140M810 60 915 165 1020 290 1095 375M940 54 985 135M990 54 1045 145 1085 190 1115 245M1000 80 1035 60
M640 420 720 375 860 310 980 285 1115 245M870 310 900 400 930 480M915 295 935 360 950 440M937 300 958 355M975 285 1000 350 1030 410
M985 325 1050 330M1005 310 1025 350 1022 390M775 345 820 420 850 490 870 560 885 640 885 780M830 330 880 410M720 375 770 440 780 445 810 490
M640 455 700 430 775 400 860 370M670 445 730 500M700 425 760 490M470 525 540 490 620 435M430 545 480 525 560 540 670 512 780 495 850 470 1000 450 1110 440
M545 480 575 540 580 650 600 750M150 467 180 480 230 485 265 450 290 485 325 525 250 560 215 520 180 480M235 500 255 485 278 500 278 515 255 528 232 515zM255 480V560M229 503H281
M325 525 400 540 440 545 520 545 560 535M30 463 150 467M30 392 145 392M60 392 68 422M105 467 92 545M165 470 170 550M30 540 90 545 170 540 215 535
M30 600 100 660 170 580 220 540M30 560 100 600 240 660M30 635 110 690 140 740M40 600 130 565M92 545 160 590 250 620M45 640 90 800M30 700 110 650 170 620 250 570
M140 680 200 630 260 590M170 550 250 620M270 535 345 612 380 580 405 540M280 570 300 595 345 612M345 575 420 640 415 680
M260 630 330 640 420 655 520 685M395 625 490 570 560 535M410 640 510 620 640 600 780 580 900 590 1000 575 1150 565M500 570 520 640 545 700 545 750
M440 545 460 600 480 700 490 740M520 655 640 635 780 615 960 580M480 540 500 570 600 600M712 500 722 585 790 585M720 538 800 525 790 600 800 650M690 585 710 650 740 695
M545 690 620 715 700 700 740 650M850 500 1110 455 1200 465M855 515 1000 500 1110 490M895 510 905 585M938 505 945 580M960 470 965 600 985 700M985 460 1000 560 1020 600 1055 710
M1040 450 1050 560 1060 640M1080 480 1095 600 1125 670M1060 600 1120 590M970 660 1050 630M990 610 960 660 1050 660M790 490 830 530 850 515M1105 480 1110 535 1135 535M890 645 960 640
M1110 400 1130 490 1150 580 1163 640M1030 410 1100 380M860 440 960 420 1030 400 1100 390M885 600 960 610M820 340 860 460
M280 690 400 740 500 770 600 800 640 810M320 775 420 760 470 780M340 830 500 790M370 700 385 820M405 700 400 760M430 720 430 750M460 740 440 840M340 715 480 760 620 810 700 830
M640 790 760 745 900 700M640 800 760 760M700 735 740 830M745 715 790 830M775 705 830 830M805 690 815 780M850 690 855 780M910 690 940 800M960 715 1000 840M985 730 1020 840M1000 735 1035 840
M700 830 900 780 1100 740 1200 700M680 780 800 760 940 730M640 770 640 800M1060 730 1100 840M1100 715 1150 830M760 800 900 770 1010 750M830 830 1000 800 1200 760M1020 790 1100 775M1020 810 1100 795M500 840 520 770M550 840 545 790
M180 755 230 840M240 745 295 728M240 750 250 790 200 790M250 770 270 840M75 820 100 840M100 815 120 840M120 840 155 825`,
  },
  {
    id: "ne",
    seam: "M1140 0H2200V810H1140z",
    at: "translate(1080 0)",
    d: `M0 120 80 108 160 110 185 120M0 140 60 100 110 70 145 54M0 75 20 110M40 105 90 160 130 210M50 54 150 115M90 80 145 160M115 54 145 140 165 240 190 330 210 470 220 560
M150 54 165 90 210 145 235 240 255 350M185 120 185 95 230 54M280 54 265 90M220 70 265 120 320 150 350 200 375 280 400 360 380 470 375 590
M210 120 265 155M0 260 110 215 180 195 270 165 400 105 460 95M30 300 120 270 120 240 110 220M0 190 30 250 80 300 130 360
M380 175 440 245 470 260M350 195 390 175 490 130M0 385 100 345 165 330M0 250 60 360M20 270 80 350M185 315 370 295M190 310 210 285 265 265M265 210 270 300 300 400 310 490 300 560
M265 210 330 180M350 240 490 220 570 205M235 170 265 210M190 335 220 335 240 320 240 290M210 280 210 310M195 360 300 355 400 370 510 375 560 385M200 390 300 395
M105 345 100 400 110 490 115 540 150 565M60 360 50 440 70 580 90 640M30 415 100 405 180 415 310 405 430 425 540 460 620 480M230 420 240 460 260 490M350 370 340 430 360 450 355 520
M110 495 200 460M110 510 230 480M145 480 160 520M0 440 60 400M0 475 145 465M300 485 400 470 470 490M380 490 460 495M210 530 320 515M330 520 420 550 490 550M30 570 110 560 160 530 210 530
M470 485 465 550M400 385 440 400 510 490 550 550 660 490M490 375 580 440 620 480M440 400 550 470 600 500M400 400 460 470 530 540M455 470 540 385M480 500 580 400M490 550 560 510 640 470M510 520 600 440 660 430M430 540 450 480 440 470
M475 310 475 370M510 315 510 375 550 420M400 370 475 310M370 265 430 230M570 54 565 200 570 240M505 130 660 130 720 200 780 260M660 130 665 170 650 190 635 280 660 300 640 335
M530 130 535 205M570 185 650 185 700 180 860 110 1030 60M570 240 650 235 760 190M610 54 690 95M570 110 650 54M660 130 720 54M690 95 800 240 850 320M530 230 590 300 640 335
M730 54 780 110 830 190 900 290M750 54 745 110 800 110 820 130M775 54 825 130M880 54 880 90 990 230 1010 300M880 90 930 54M975 54 1000 100 1030 165M960 54 930 80 950 75 940 60M700 240 870 160 1030 100
M745 200 730 240 770 260M640 335 760 270 890 235M640 395 760 330 900 290 1030 255M650 420 730 390M760 270 830 395M700 300 750 370M660 310 715 390M820 260 850 320M870 260 890 300
M770 260 1000 190M960 210 985 195 985 215 960 215M690 160 770 130 820 100M720 180 770 180M665 400 695 455M680 400 715 460M690 400 720 450M650 410 690 400M610 300 660 290
M40 690 90 640 150 600 250 570 300 570 370 595 410 640 420 700 415 840M290 570 290 715M320 560 335 700 335 750M0 700 20 760 50 840M90 640 120 740 150 840M150 630 160 700M150 640 250 610 320 600
M160 630 240 605M165 640 170 680 185 680M175 650 240 635M0 735 160 705 260 700 420 700M200 600 240 720 280 840M50 700 80 780 95 840M0 790 150 770 300 755 410 760M350 760 350 790 400 785M370 720 375 740 410 740
M0 820 200 790 400 765M300 755 330 840M240 720 290 715M180 700 215 780 235 840M0 760 100 740M100 830 300 800M260 800 270 840
M700 710 780 760 860 800M650 775 740 778 870 800 1030 845M860 800 905 760 960 735 970 670 995 630 1030 660M890 800 930 775 1030 720M900 765 940 780
M1030 570 900 610 780 655 700 705 660 770 655 840`,
  },
  {
    id: "sw",
    seam: "M0 810H1140V1700H0z",
    at: "translate(0 780)",
    d: `M30 75 100 45 155 40M30 130 110 100M90 30 145 160 190 260 225 340 250 420 275 540 290 640 290 700 300 842M105 30 155 155M100 28 150 158M150 130 195 100 210 110 215 160 300 225
M170 190 215 185 240 175 270 160 325 150 400 110M175 0 230 60 265 110 300 200 330 310 350 400 370 510M205 45 325 25M30 235 110 195 150 165M140 170 135 200 150 250 150 290 115 310M135 190 118 310
M30 345 110 320 180 285 260 255 340 220 430 190M180 205 270 195M30 370 150 320 180 300M190 240 240 220 250 245M210 280 270 265M335 215 350 245 430 230M345 270 440 260M370 210 400 270M270 305 300 285 330 320
M160 355 450 358 600 348M30 430 60 450 200 405 250 380 330 360M30 400 110 400 230 370M70 440 115 400M30 480 80 520M50 440 110 545M75 430 150 430 190 480M90 440 250 420 320 420
M110 545 165 520 165 490 230 480M235 380 260 440M200 385 250 470 270 465 280 490 340 490M260 380 310 480 330 460M275 365 320 480M375 360 380 400 410 410 415 430 428 460M380 280 380 310 410 330 415 370
M30 575 130 545 280 535 380 515 470 512M110 550 130 600 145 665M175 540 205 630M155 500 190 640 180 670M220 570 275 555 285 580M220 570 225 605 245 600M130 630 245 600M290 575 430 580 435 600M290 610 430 600 500 595
M330 510 350 575M370 500 385 575M400 515 435 585M75 590 90 575 105 615 90 630 75 590M225 610 235 660M485 575 485 660M500 600 505 640 490 660M480 570 540 620 600 635M190 345 150 360 160 400M100 380 200 330 260 310M270 440 340 430M245 440 300 440
M30 672 280 668 480 670 560 655M95 670 105 720M180 670 155 760 150 842M30 740 90 735 230 715M165 712 310 715 430 715 520 690 600 700M75 735 95 770 90 820M30 800 150 775 290 765 430 740 500 720
M340 670 335 715 350 780M150 800 300 795 480 775 560 760M230 790 240 842M410 740 450 740 440 760 415 770M480 670 475 740 480 800 520 842M530 690 525 740M600 700 610 750 590 842M560 655 640 740 680 842M475 675 560 660 600 690
M625 715 670 740 700 842M640 690 700 760 730 842M690 680 740 780 770 842M735 675 790 760 830 842M780 665 830 740 870 842M840 680 880 760 900 842M840 740 960 720 970 760 860 770M490 830 640 780 760 740M350 820 365 842M385 820 395 842M450 800 480 842
M680 790 860 760M700 830 900 780 980 770 1100 740M910 610 950 700 990 810M940 670 1040 640M960 580 985 640M1040 640 1065 720 980 760M1000 750 1030 842M1040 750 1070 842M990 800 1110 770M975 780 1000 810M900 780 960 842M640 740 840 700M800 640 850 690M1020 550 1025 600 1010 620M1065 690 1100 690M600 842 760 820
M600 348 620 330 640 280 670 255 770 255 850 320 905 380 912 440 890 480 820 518 700 510 655 500 640 450 600 348M660 490 880 345M770 250 850 320 1020 540 1060 600 1110 842M470 512 560 500 700 510 820 518
M545 20 620 110 700 210 780 260M555 0 545 20 550 40 590 100M330 10 350 70 400 150 430 190 440 260 455 350 462 430 468 510M350 70 450 45 545 30 640 10M360 95 480 60 560 50M400 140 500 120 600 95 720 40 760 20
M420 0 440 60 490 170 520 250 560 300 600 340M380 10 400 60 440 150 460 210 500 240M445 260 520 255 640 235 760 185 870 150 960 140 1200 90M440 230 480 215 500 235M430 185 580 130 700 90 780 60 840 40
M490 90 590 75M470 0 510 90 560 180M590 20 630 100 690 190M520 130 570 180 580 230 620 290M570 180 650 160 700 150M580 150 620 210 660 220 700 170 750 140M600 160 640 210 600 240 620 290 640 300M650 130 690 200M660 120 740 140 770 120
M640 20 700 110 730 160M640 10 760 50 880 80M700 0 720 40 770 120 800 200M740 0 790 100 830 210 870 300M820 60 800 120 840 150M690 0 840 30 1000 0M460 100 560 90M500 0 560 10 620 0
M680 215 760 200 930 180 1060 190 1200 150M820 115 1000 75 1200 40M800 70 950 45 1080 25 1200 0M850 95 1000 95 1200 60M840 60 840 110 870 150 910 250 940 300M870 80 910 160 940 290 970 350M880 0 900 70 930 160 980 280M920 0 960 130 1010 220 1050 320
M950 40 1080 20M960 100 1060 90M970 130 1080 115M1010 0 1050 100 1090 180 1110 270M1030 0 1070 110 1100 150M1060 0 1090 90 1140 200 1180 320M1120 0 1160 110 1200 190M1160 0 1200 80
M850 265 1000 220 1200 190M870 300 1000 260 1200 220M890 350 1000 300 1100 270 1200 240M905 380 1050 385 1110 350 1200 330M950 140 1060 230 1070 310M1010 340 1050 400 1100 530 1150 650 1180 750 1200 842M1100 370 1160 500 1200 600
M500 590 600 580 700 555 820 530M540 620 600 635 720 600 860 560 1000 520 1200 470M590 690 600 640 640 610M590 690 620 710 700 670 820 640 960 590 1030 545M655 500 700 520 740 610 760 670M565 500 600 590 600 640M820 518 860 600 880 640
M740 515 780 580 820 650M860 495 910 600M890 470 960 590M700 620 720 670M640 610 680 680M640 640 760 640 780 620M915 385 1000 490M930 385 1030 545M960 450 1200 360M900 470 1000 430 1200 380M880 500 1200 430M930 560 950 540 955 580
M960 390 1010 480 1060 600M1000 390 1080 540 1110 620M1150 340 1200 430M580 550 620 540 650 550 680 530 690 550M470 380 520 370M500 360 520 440 560 500M470 410 580 390M465 430 600 405M480 470 605 450M540 350 580 430 650 490M470 500 560 490M580 500 650 465
M1060 570 1200 540M1060 620 1100 610M1100 710 1200 690M1110 760 1200 740M1100 730 1200 710M1180 560 1165 620 1175 680M1120 700 1160 842M1130 800 1200 790M1110 680 1200 660M1120 500 1200 490`,
  },
  {
    id: "se",
    seam: "M1140 780H2200V1700H1140z",
    at: "translate(1080 780)",
    d: `M690 115 750 90 850 50 930 0M750 90 800 170 830 230 900 290 1000 340 1030 300M870 50 870 100 900 170 940 250 1020 340M770 135 860 105M800 175 870 135M820 120 850 190M930 175 1030 180M1000 285 1030 285M1020 60 1010 130 1025 200
M830 0 930 30 1030 60M840 10 1030 80M860 40 1030 100M650 0 660 60 740 170 830 230 930 320 1030 405M840 0 900 40
M410 0 415 60 440 160 490 240 550 290 620 350 720 460 850 560 950 640 1030 710M0 10 50 110 105 250M0 60 40 170M110 60 115 150 110 280M150 0 165 160 165 240 210 360M190 0 200 150 240 240 260 330 270 430 290 560
M260 0 290 160 310 250 350 350M320 0 350 110 370 180 420 300M80 0 110 60 150 130M30 0 60 100M0 40 130 10 200 0M0 95 130 75 260 20 410 0M0 130 200 100 330 75 415 60M0 170 150 130M0 220 220 180 430 145M0 300 110 290 260 260M20 60 140 40M20 80 150 65M255 30 300 20 305 60 265 70
M230 240 340 225 470 195M370 175 440 150M370 190 440 165M400 215 470 205M290 310 400 290 430 265 500 250M180 320 250 320M120 340 250 345 300 340 350 310M380 110 385 150M110 260 200 250M260 60 280 160 380 150M235 130 260 140 265 160 290 165M160 220 230 200M150 280 160 320 210 330
M430 290 440 350 440 400M490 310 520 410M415 295 500 270M440 400 610 350M510 410 620 375M470 320 500 300M360 350 480 310M350 350 400 400M380 350 405 415M250 300 330 290M260 345 300 400 305 420M30 180 50 230M0 250 100 240M110 280 150 280 250 270
M90 660 85 580 150 500 230 460 350 425 440 418 580 422 640 440 700 500 740 610M110 650 110 590 160 520 260 465 300 455M95 660 110 740 140 842M110 650 150 800 180 842M435 400 435 490 450 610M355 430 355 490M435 490 580 495 670 495 710 530
M230 495 370 490 435 490M510 400 510 490M580 422 580 550 600 600 590 700 600 750M625 440 625 495 650 600 650 700 640 780M470 420 470 490M455 435 580 440M510 465 580 475M520 490 540 590M540 560 730 540M450 610 600 590 690 610 800 610 860 580M600 600 650 605 730 625
M510 610 515 750M515 640 640 630 740 650M560 630 560 700M490 705 740 715M545 655 590 655M650 640 735 645 735 780M650 710 800 715M690 650 700 680M470 650 490 705M460 610 465 640M390 650 480 640M420 650 415 740 380 760M380 760 500 755 600 750 700 765 860 800 1030 790
M280 460 300 600M265 500 265 620 330 720 380 842M290 560 320 620 380 740 430 842M310 550 370 530 370 490M300 520 370 520M300 540 420 540M385 570 435 570M385 540 395 620M410 545 435 570 445 610M300 600 440 570M330 640 450 610M280 455 350 440M280 480 350 460M290 440 310 500
M130 600 260 570M180 545 260 530M150 600 180 700M170 530 210 640M225 490 250 530 250 600 245 650 200 680M110 640 180 620M0 680 80 660 200 640M20 710 150 690 240 650M30 750 60 740 60 720M20 770 130 740M160 720 250 690 350 670 400 640M180 760 360 700M200 800 400 750M240 842 420 800M60 842 200 800
M130 740 160 800M160 720 210 780M250 660 300 760M220 640 240 700 260 690M280 650 320 740 350 842M180 740 220 842M40 760 100 842M0 700 20 760 50 842M30 800 110 780M340 720 370 710M240 600 280 660M80 720 90 760 120 800M270 620 290 600
M480 755 480 800M515 760 535 842M440 790 520 790M470 842 620 820M600 780 740 785M660 785 660 842M740 785 740 842M700 770 690 842M860 800 855 842M620 790 650 810 680 790M805 715 820 842M610 750 620 842M740 740 800 740M400 842 480 810
M740 610 790 700 805 760M700 480 740 550M650 470 720 460M580 420 640 400M650 405 610 440M730 560 800 520M735 570 810 540M735 585 820 550M740 600 830 560M730 545 735 600 765 600M840 545 860 550 980 660M670 495 700 480
M790 640 860 620 890 600M860 580 920 690 980 780 1010 842M800 660 930 620M810 690 960 650M830 720 1000 680M860 740 1020 700M870 760 970 730M890 780 1000 745M900 800 1030 770M920 830 1030 810M800 610 860 720 900 780M820 640 880 760 930 842M770 620 830 760 830 800M900 610 960 680 1030 770M640 440 700 380M660 440 640 490 700 450M860 820 940 800M880 842 900 800
M0 350 50 400 100 470 120 500M30 380 80 480M60 360 120 450M90 350 130 420 170 490M120 370 160 430 180 490M150 350 210 470M190 350 250 440M220 350 220 380 250 440M0 440 150 400 250 370M0 500 150 450 270 400M0 540 120 510M0 580 130 540M0 410 150 370 240 350M20 470 200 410M0 480 50 560M20 560 90 660M0 380 120 350M80 290 100 330`,
  },
];

const boundary =
  "M2112 450 2010 475 1890 510 1820 560 1720 640 1650 720 1638 840 1640 850 1670 920 1780 1040 1940 1160 2030 1240 2112 1325M1570 595 1715 645";

const creek = "M1430 70 1510 95 1580 115 1588 180 1570 245 1620 290 1650 370 1710 400 1750 490";

const wharves =
  "M1870 1015l10-12 6 10-8 12M1930 1050l12-6 8 20-14 6M1975 1080l14 4-6 14M2000 1110l10-6 8 18 10-6M2030 1135l16 6-8 14M2060 1155l14 10 12-4";

const bigLabels = [
  ["闸北区", 150, 125],
  ["虹口区", 490, 91],
  ["浦东新区", 579, 268],
  ["静安区", 42, 363],
  ["黄浦区", 347, 364],
  ["卢湾区", 150, 507],
];

const smallLabels = [
  ["俞泾浦", 447, 5],
  ["沙泾港", 487, 7],
  ["虹口港", 505, 72],
  ["黄浦江", 592, 173],
  ["吴淞江(苏州河)", 233, 206],
  ["喷水池", 235, 386],
];

const offices = [
  [26, 125, "#7c7a10"],
  [440, 28, "#7c7a10"],
  [429, 273, "#7c7a10"],
  [241, 371, "#7d1040"],
  [222, 519, "#7c7a10"],
];

const ShanghaiMap = () => (
  <MapDrawing width="694" height="523" viewBox="0 0 694 523">
    <defs>
      <clipPath id="extent">
        <path d="M0 0h694v523H0z" />
      </clipPath>
      {roads.map((sheet) => (
        <clipPath key={sheet.id} id={sheet.id}>
          <path d={sheet.seam} />
        </clipPath>
      ))}
    </defs>
    <path d="M0 0h694v523H0z" fill="#b3fdb5" />
    <g clipPath="url(#extent)">
      <g transform="translate(-10 -18) scale(.33333)" fill="none" strokeWidth="3">
        {districts.map(([fill, d]) => (
          <path key={d} d={d} fill={fill} stroke="#8f8f86" />
        ))}
        <path d={wusongRiver} fill="#f3f5b8" stroke="#6d6a78" strokeWidth="6" />
        <path d={creek} stroke="#5f7286" strokeWidth="20" />
        <path d={creek} stroke="#a3c8b6" strokeWidth="13" />
        <path d={creek} stroke="#4c5c8c" strokeWidth="3" />
        <path d={boundary} stroke="#fbfbd6" strokeWidth="4" />
        <path d={wharves} stroke="#8c8578" />
        <path d="M660 1120q-6-18 20-20 20-10 24 2-20 8-26 12 10 10-18 6zM778 1050q4-10 12-4" fill="#dff0cf" stroke="#a58c78" />
        <g stroke="#1a1f96" shapeRendering="crispEdges">
          <path d="M1490 770 1720 775 1960 785" />
          {roads.map((sheet) => (
            <g key={sheet.id} clipPath={`url(#${sheet.id})`}>
              <path transform={sheet.at} d={sheet.d} />
            </g>
          ))}
        </g>
      </g>
    </g>
    <path d="M.5.5h693v522H.5z" fill="none" stroke="#7c7c7c" />
    {offices.map(([x, y, fill]) => (
      <circle key={`${x}-${y}`} cx={x} cy={y} r="2" fill={fill} stroke="#111" />
    ))}
    <g fontSize="18" fontWeight="700">
      {bigLabels.map(([text, x, y]) => (
        <text key={text} x={x} y={y}>
          {text}
        </text>
      ))}
    </g>
    <g fontSize="11" fontWeight="700">
      {smallLabels.map(([text, x, y]) => (
        <text key={text} x={x} y={y}>
          {text}
        </text>
      ))}
    </g>
  </MapDrawing>
);

const taskIcons = {
  store: (
    <>
      <path d="M10 9V6q0-5 5-5t5 5v3" fill="none" stroke="#dfe3e6" strokeWidth="2" />
      <path d="M0 8h30l-1 21H1z" fill="#fff" />
      <path d="M9 13h5v5H9z" fill="#f25022" />
      <path d="M16 13h5v5h-5z" fill="#7fba00" />
      <path d="M9 20h5v5H9z" fill="#00a4ef" />
      <path d="M16 20h5v5h-5z" fill="#ffb900" />
    </>
  ),
  mail: (
    <>
      <path d="M0 11 15 1l15 10v18H0z" fill="#0f5fa8" />
      <path d="m0 11 15 10L30 11v18H0z" fill="#2aa3ea" />
      <path d="m0 29 15-8L30 11v18z" fill="#1f8fdb" />
      <path d="M2 11h26L15 21z" fill="#f4f7fa" />
    </>
  ),
  firefox: (
    <>
      <circle cx="15" cy="17" r="13" fill="#ff6a2c" />
      <path d="M15 1q4 4 5 8 3-1 3-3 6 6 5 13-2 8-9 10 5-5 4-10T15 9z" fill="#ffcf33" />
      <path d="M2 17q3 13 16 13 8-1 10-9-5 6-12 4-7-2-14-8z" fill="#f23460" />
      <circle cx="15" cy="17" r="6" fill="#7a48dd" />
      <path d="M3 7q4 1 6 3l6 2-5 3 1 5Q2 18 3 7z" fill="#ff8b26" />
    </>
  ),
  explorer: (
    <>
      <path d="M1 4h10l2 3h16v7H1z" fill="#e2a72c" />
      <path d="M1 9h28v17H1z" fill="#fbd668" />
      <path d="M6 27V17h18v10h-5v-5h-8v5z" fill="#3f9be0" />
    </>
  ),
  wechat: (
    <>
      <path d="M11 3c13 0 13 17 0 17l-3-.5L3 22l1-4C-3 12 2 3 11 3z" fill="#7bd13a" />
      <path d="M20 12c12 0 11 13 4 14l1 3-4-2c-11 1-12-15-1-15z" fill="#f0f3f4" />
      <path d="M6 8h2v2H6zm7 0h2v2h-2zm3 9h2v2h-2zm6 0h2v2h-2z" fill="#3b5030" />
    </>
  ),
};

const apps = [
  { name: "store" },
  { name: "mail" },
  { name: "firefox", open: true },
  { name: "explorer", open: true },
  { name: "wechat", open: true },
];

const Tasks = () => (
  <TaskBar>
    <TaskButton $width={60} aria-label="开始">
      <svg width="20" height="20" viewBox="0 0 20 20">
        <path d="m0 3 9-1.500V9.500H0zM10 1.300 20 0v9.500H10zM0 10.500h9v8L0 17zm10 0h10V20l-10-1.300z" fill="#fff" />
      </svg>
    </TaskButton>
    <SearchBox>
      <svg width="20" height="22" viewBox="0 0 20 22" fill="none" aria-hidden="true">
        <circle cx="13" cy="7" r="6" stroke="#222" strokeWidth="1.500" />
        <path d="m9 12-8 9" stroke="#222" strokeWidth="1.500" />
      </svg>
      <input type="text" aria-label="搜索" placeholder="在这里输入你要搜索的内容" />
    </SearchBox>
    <TaskButton $width={60} aria-label="Cortana">
      <svg width="20" height="22" viewBox="0 0 20 22">
        <circle cx="10" cy="11" r="8" fill="none" stroke="#fff" strokeWidth="3" />
      </svg>
    </TaskButton>
    <TaskButton as="span" $width={23}>
      <TaskDivider />
    </TaskButton>
    {apps.map((app) => (
      <TaskButton key={app.name} $open={app.open} aria-label={app.name}>
        <svg width="30" height="30" viewBox="0 0 30 30">
          {taskIcons[app.name]}
        </svg>
      </TaskButton>
    ))}
    <TaskButton $open $active aria-label="ArcMap">
      <Icon name="app" size={28} />
    </TaskButton>
    <Tray>
      <TaskDivider />
      <TrayItem $width={50}>桌面</TrayItem>
      <TrayItem $width={12} $size={20} $raised>
        »
      </TrayItem>
      <TrayItem $width={38} aria-label="显示隐藏的图标">
        <svg width="18" height="10" viewBox="0 0 18 10" fill="none">
          <path d="m1 9 8-7 8 7" stroke="#fff" strokeWidth="1.500" />
        </svg>
      </TrayItem>
      <TrayItem aria-label="电源">
        <svg width="22" height="16" viewBox="0 0 22 16" fill="none">
          <path d="M6 4h13v9H5V9M19 6h2v5h-2" stroke="#fff" strokeWidth="1.300" />
          <path d="M8 6h9v5H7z" fill="#fff" />
          <path d="M1 3h5v3q-2 3-5 0zM2 3V0m3 3V0M4 8v5h3" stroke="#fff" />
        </svg>
      </TrayItem>
      <TrayItem aria-label="网络">
        <svg width="18" height="18" viewBox="0 0 18 18" fill="none">
          <path d="M1 17Q2 3 16 2M5 17q1-10 11-11M9 17q1-6 7-7" stroke="#bfc5c8" strokeWidth="1.400" />
          <path d="M12 14h4v3h-4z" fill="#fff" />
        </svg>
      </TrayItem>
      <TrayItem aria-label="音量">
        <svg width="20" height="18" viewBox="0 0 20 18" fill="none">
          <path d="M1 6h3l5-4v14l-5-4H1z" stroke="#fff" strokeWidth="1.300" />
          <path d="M11 6q2 3 0 6" stroke="#fff" strokeWidth="1.300" />
          <path d="M14 4q3 5 0 10M17 2q4 7 0 14" stroke="#7b868c" strokeWidth="1.300" />
        </svg>
      </TrayItem>
      <TrayItem $size={19}>中</TrayItem>
      <TrayItem $width={46}>
        <Ime>拼</Ime>
      </TrayItem>
      <Clock>
        10:17
        <br />
        2020/6/24
      </Clock>
      <TrayItem $width={52} aria-label="通知">
        <svg width="20" height="20" viewBox="0 0 20 20" fill="none">
          <path d="M1 1h18v14h-6l-3 3-3-3H1z" stroke="#fff" strokeWidth="1.300" />
        </svg>
      </TrayItem>
      <ShowDesktop aria-label="显示桌面" />
    </Tray>
  </TaskBar>
);

const App = () => (
  <>
    <GlobalStyle />
    <Window>
      <TitleBar>
        <Icon name="app" />
        <Title>shanghai.mxd - ArcMap</Title>
        <WindowButton aria-label="最小化">
          <svg width="12" height="12" viewBox="0 0 12 12">
            <path d="M0 6.500h12" stroke="#888" />
          </svg>
        </WindowButton>
        <WindowButton aria-label="还原">
          <svg width="12" height="12" viewBox="0 0 12 12" fill="none">
            <path d="M.5 2.500h9v9h-9zM2.500 2.500v-2h9v9h-2" stroke="#888" />
          </svg>
        </WindowButton>
        <WindowButton aria-label="关闭">
          <svg width="12" height="12" viewBox="0 0 12 12">
            <path d="m0 0 12 12M12 0 0 12" stroke="#888" />
          </svg>
        </WindowButton>
      </TitleBar>
      <MenuBar>
        {menus.map((menu) => (
          <MenuItem key={menu}>{menu}</MenuItem>
        ))}
      </MenuBar>
      <Toolbars>
        {toolRows.map((row) => (
          <Toolbar key={row}>
            <Grip />
            {row.split(" ").map((name, i) => (
              <Tool key={i} name={name} />
            ))}
            <Overflow aria-label="工具栏选项">
              <svg width="8" height="9" viewBox="0 0 8 9">
                <path d="M1 1h6v1H1zM0 4h8L4 8z" fill="#000" />
              </svg>
            </Overflow>
          </Toolbar>
        ))}
      </Toolbars>
      <Workspace>
        <SideTabs>
          <SideTab>
            <Icon name="toc" />
            <span>内容列表</span>
          </SideTab>
        </SideTabs>
        <Panel>
          <PanelHeader>
            <h2>内容列表</h2>
            <button aria-label="自动隐藏">
              <svg width="12" height="12" viewBox="0 0 12 12" fill="none">
                <path d="M1 6h4M5 2v8M5 4h5v4H5M5 7.500h5" stroke="#111" strokeWidth="1.500" />
              </svg>
            </button>
            <button aria-label="关闭">
              <svg width="12" height="12" viewBox="0 0 12 12">
                <path d="m2 2 8 8m0-8-8 8" stroke="#111" strokeWidth="1.800" />
              </svg>
            </button>
          </PanelHeader>
          <PanelTools>
            <ToolButton $active aria-label="按绘制顺序列出">
              <Icon name="byOrder" />
            </ToolButton>
            <ToolButton aria-label="按源列出">
              <Icon name="bySource" />
            </ToolButton>
            <ToolButton aria-label="按可见性列出">
              <Icon name="byVisible" />
            </ToolButton>
            <ToolButton aria-label="按选择列出">
              <Icon name="bySelect" />
            </ToolButton>
            <Separator />
            <ToolButton aria-label="选项">
              <Icon name="options" />
            </ToolButton>
          </PanelTools>
          <Tree>
            <TreeRow $indent={10} $bold>
              <Expander aria-label="收起" />
              <Spacer />
              <Icon name="layers" />
              <Spacer />
              上海市行政区划图
            </TreeRow>
            {tree.map((item, i) => (
              <TreeItem key={i} item={item} />
            ))}
          </Tree>
        </Panel>
        <View>
          <ViewColumn>
            <RulerBar>
              <Ruler />
            </RulerBar>
            <Canvas>
              <Page>
                <DataFrame>
                  <ShanghaiMap />
                </DataFrame>
              </Page>
            </Canvas>
            <ScrollBar>
              <Thumb $size={1421} />
              <Track $size={143} />
              <ScrollButton aria-label="向右滚动">
                <Chevron d="m4 1 4 4-4 4" width={2.500} />
              </ScrollButton>
            </ScrollBar>
          </ViewColumn>
          <ScrollBar $vertical>
            <ScrollButton $vertical aria-label="向上滚动">
              <Chevron d="m2 7 4-4 4 4" width={2.500} />
            </ScrollButton>
            <Track $size={181} />
            <Thumb $size={462} />
            <Track $size={130} />
            <ScrollButton $vertical aria-label="向下滚动">
              <Chevron d="m2 3 4 4 4-4" width={2.500} />
            </ScrollButton>
            <ScrollButton as="span" $vertical />
          </ScrollBar>
        </View>
        <SideTabs $right>
          <SideTab $right>
            <Icon name="catalog" />
            <span>目录</span>
          </SideTab>
          <SideTab $right>
            <Icon name="search" />
            <span>搜索</span>
          </SideTab>
        </SideTabs>
      </Workspace>
      <StatusBar>
        <p>-5.34  5.29 英寸</p>
      </StatusBar>
      <Tasks />
    </Window>
    <Timer>02:28</Timer>
  </>
);

export default App;
